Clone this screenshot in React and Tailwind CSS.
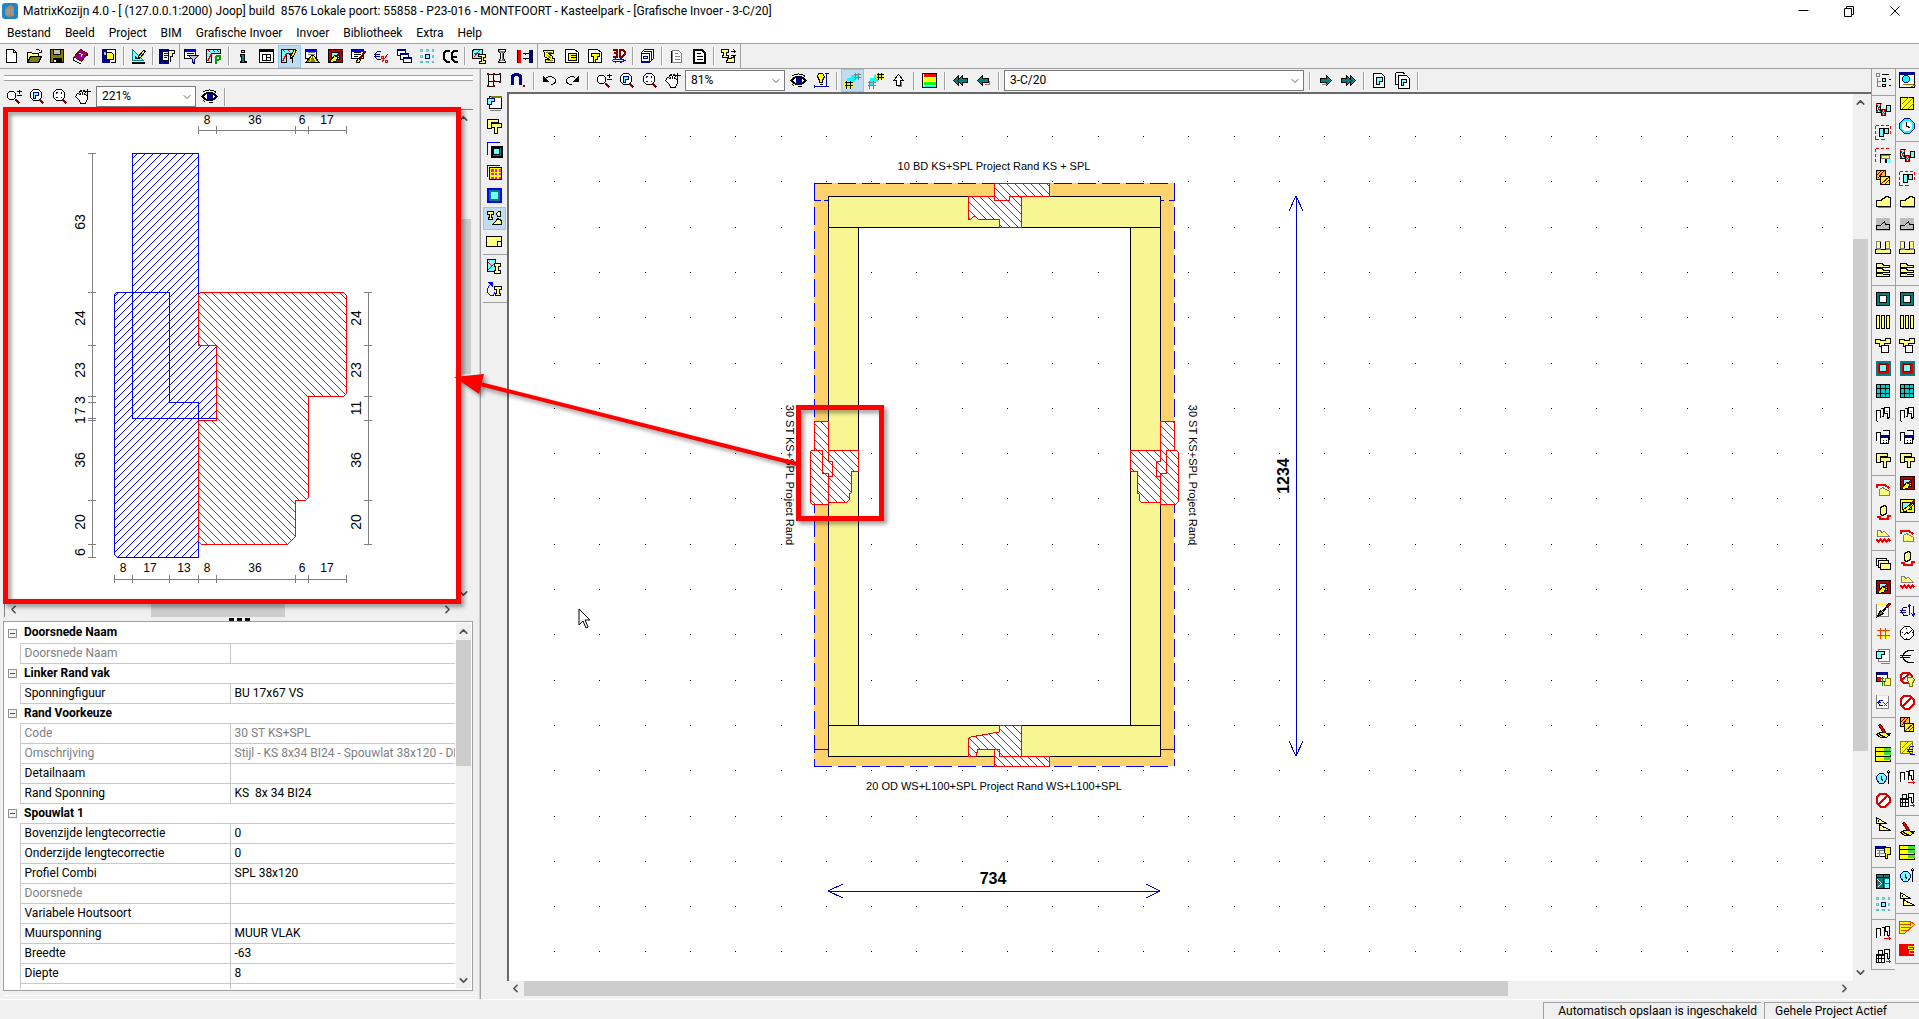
import { useState } from 'react';
import clsx from 'clsx';
import { ChevronUp, ChevronDown, ChevronLeft, ChevronRight } from 'lucide-react';

const K = '#000';
const W = '#fff';
const Y = '#ffff80';
const YY = '#ffff00';
const C = '#7ff';
const T = '#008080';
const N = '#000090';
const B = '#0000ff';
const R = '#f00000';
const M = '#800000';
const G = '#808080';
const L = '#c0c0c0';
const O = '#808000';

// toolbar glyphs on a 16x16 grid: [path, stroke, fill, stroke width]
const GLYPHS = {
  fresh: [['M3 1h7l3 3v10H3z', K, W], ['M10 1v3h3', K]],
  open: [['M1 13V4h4l1 1h6v3', K, Y], ['M1 14l3-6h11l-3 6z', K, O], ['M9 2c2-2 4-1 5 1m1-2v3h-3', K]],
  save: [['M1 1h13v13H1z', K, O], ['M4 1h7v5H4z', K, L], ['M4 10h8v4H4z', K, K], ['M5 11v2', W, null, 2]],
  book: [['M1 9l7-8 7 4-6 8z', M, '#900090'], ['M1 9v3l7 3 7-7V5', K], ['M2 10l7 4 6-6', W], ['M7 5l3 1-2 3', YY]],
  copybook: [['M1 1h7v13H1z', N, N], ['M5 1h9v13H9', K, W], ['M5 4h5l2 2v5H5z', K, YY], ['M3 3v3', L, null, 2]],
  square: [['M2 1v11h11z', T, C], ['M5 8v2h2z', K, W], ['M1 14h13', K, null, 2], ['M8 8l5-6 2 1-5 6-2 1z', K, YY]],
  profsheet: [['M0 1h9v14H0z', N, N], ['M3 3h6v9H3z', K, W], ['M4 5h4m-4 2h4m-4 2h3', B], ['M9 2h6v3h-2v3h-2v5', K, Y]],
  filter: [['M1 1h11v9H1z', K, W], ['M1 2h11', B, null, 2], ['M3 5h7m-7 2h7', K], ['M5 7h10l-4 4v4l-2-1v-3z', N, L]],
  projp: [['M0 1h14v4H5v9H0z', K, C], ['M1 13l4-8m-3-3l2 2m3-2l2 2m2-2l2 2', R], ['M9 7v8m0-8h3c2 0 2 4 0 4H9', '#00a000', null, 2]],
  info: [['M6 2h3v2H6z', K, C], ['M5 6h4v7h2v1H5v-1h1V8H5z', K, T]],
  window: [['M1 1h14v13H1z', K, W], ['M1 2h14', K, null, 2], ['M4 6h8v6H4zM8 6v6m0-3h4', K]],
  grafisch: [['M0 1h13v4H5v9H0z', K, C], ['M1 13l4-8m-3-3l2 2m3-2l2 2', R], ['M7 6h4v8', K], ['M9 8l4-7 2 1-4 7-2 1z', K, YY]],
  roof: [['M1 1h11v9H1z', K, W], ['M1 2h11', B, null, 2], ['M3 4h7m-7 2h7', G], ['M1 14l6-7h2l6 7z', K, O], ['M5 14l2-6m2 0l3 6', YY]],
  painting: [['M1 1h14v13H1z', K, YY], ['M3 4h9v7H3z', K, C], ['M4 11l9-7 1 2-6 6-4 2z', K, YY], ['M9 8l6-6', M, null, 2]],
  paintred: [['M1 1h14v13H1z', K, '#c00000'], ['M4 4h8v7H4z', K, C], ['M3 12l4-5 4 2-3 4-5 1z', K, YY], ['M9 8l6-6', M, null, 2]],
  brushlist: [['M1 1h12v9H1z', K, W], ['M1 2h12', B, null, 2], ['M3 4h7m-7 2h7m-7 2h4', K], ['M6 14l1-4 3 1-1 3z', K, YY], ['M9 10l6-7', M, null, 2]],
  europct: [['M7 3H4L2 5v4l2 2h3M0 6h6M0 8h6', N], ['M8 14l6-8M8 8h2v2H8zM12 12h2v2h-2z', R]],
  windows: [['M1 1h8v6H1z', K, W], ['M4 5h8v6H4z', K, W], ['M7 9h8v5H7z', K, W], ['M1 2h8M4 6h8M7 10h8', N]],
  dots9: [['M1 1h2v2H1zM7 1h2v2H7zM13 1h1v2h-1zM1 7h2v2H1zM13 7h1v2h-1zM1 13h2v1H1zM7 13h2v1H7zM13 13h1v1h-1z', '#5cc', C], ['M6 6h4v4H6z', N, C]],
  ce: [['M7 2H4L1 5v5l3 3h3', K, null, 2], ['M15 2h-3L9 5v5l3 3h3M9 8h5', K, null, 2]],
  catalog: [['M1 2l2-1h8v9H1z', K, C], ['M2 9l6-7M2 5h6', R], ['M7 6h7v3h-2v3h2v3H8v-2h2V8H7z', K, Y]],
  ibeam: [['M4 1h7v2L9 5v5l2 3v1H4v-1l2-3V5L4 3z', K, G], ['M5 2h5M5 13h5M7 4v7', W]],
  gaph: [['M2 1v13', R, null, 3], ['M13 1v13', N, null, 3], ['M5 5h6M5 10h6M8 4v2M8 9v2', K], ['M0 1v13m15-13v13', K]],
  scroll: [['M2 2h10v3H7l4 3v2h2v4H4v-3h4L3 8V5z', K, YY], ['M4 4h6M6 7l4 3M6 12h5', O]],
  yellowdoc: [['M1 1h9l4 3v10H1z', K, W], ['M4 5h8v7H4z', K, YY], ['M6 7h5M6 9h5', K]],
  profdoc: [['M1 1h9l4 3v10H1z', K, W], ['M4 5h8v3h-2v3H8v3H6V8H4z', K, YY]],
  threed: [['M2 1h4v3H3h3v4H2M9 1h3l2 2v3l-2 2H9z', M, null, 2], ['M2 12l3-2v1h5v-1l4 2-4 2v-1H5v1z', B, W]],
  stack: [['M5 1h9v9l-3 3H2V4z', N, W], ['M2 5h8v9H2zM4 3h8v8M4 8h4v2H4z', N]],
  docgray: [['M4 2h6l3 3v9H4z', G, W], ['M6 5h3m-3 3h5m-5 3h5', G], ['M3 2v12', K]],
  doclines: [['M2 1h8l3 3v10H2z', K, W, 2], ['M5 5h4m-4 3h6m-6 3h6', K]],
  convert: [['M1 1h7v3H6v3h2v2H2V7h1V4H1z', K, Y], ['M10 3h5m-2-2l2 2-2 2M15 7h-5', K], ['M7 10h3l4-2v6H6z', K, Y]],
  zoompm: [['M4 3h4l2 2v4l-2 2H4L2 9V5z', K, W], ['M10 11l4 4', M, null, 2], ['M11 3h5m-2-2v4m-3 2h5', K]],
  zoomp: [['M5 1h5l3 3v5l-3 3H5L2 9V4z', K, W], ['M5 10V4h5v3H7v3z', N, C], ['M11 11l4 4', M, null, 2]],
  zoomfit: [['M5 1h5l3 3v5l-3 3H5L2 9V4z', K, W], ['M5 5V4h1m3 0h1v1m0 3v1H9M6 9H5V8', N], ['M11 11l4 4', M, null, 2]],
  hand: [['M1 8l2-3 3 1-1-3 2-1 1 3 1-3 2 1-1 3 3 1v3l-2 5H6l-1-3z', K, W], ['M13 0v6m-3-3h6', K]],
  eye: [['M1 8c3-5 10-5 14 0-4 5-11 5-14 0z', K, W, 2], ['M6 6h4v4H6z', N, N, 2], ['M2 3c4-2 9-2 13 1M2 12l2 2m3 0h4', K]],
  magnet: [['M2 12V5c0-4 8-4 8 0v7', N, null, 3], ['M13 13h1v1h-1z', M, M]],
  undo: [['M5 5c4-2 9 0 9 3s-3 4-5 4', K], ['M2 4v5h5z', K, K]],
  redo: [['M11 5C7 3 2 5 2 8s3 4 5 4', K], ['M14 4v5H9z', K, K]],
  bulb: [['M5 1h4l2 3-2 4v2H6V8L4 4z', K, YY], ['M1 14h14M13 1v12M1 12v3m10-14h4', N], ['M6 12h3', K]],
  gridon: [['M4 12V7h4V4h5', '#0ff', null, 4], ['M0 9h8v5H0z', YY, '#cf0'], ['M2 8v8m4-8v8M0 10h8M0 13h8', K], ['M11 0v7m3-7v7M9 2h7M9 5h7', G]],
  gridoff: [['M4 12V7h4V4h5', '#0ff', null, 4], ['M9 1h7v5H9z', YY, '#cf0'], ['M2 8v8m4-8v8M0 10h8M0 13h8', G], ['M11 0v7m3-7v7M9 2h7M9 5h7', K]],
  up: [['M8 2l5 6h-3v5H6V8H3z', K, W], ['M11 9v5H7', G]],
  colors: [['M1 1h14v14H1z', K, W], ['M2 3h12', '#ff0000', null, 3], ['M2 7h12', YY, null, 3], ['M2 11h12', '#00ff00', null, 3], ['M2 14h12', '#0ff', null, 1]],
  left: [['M2 8l5-5v3h6v4H7v3z', K, T], ['M9 12h5V8', G]],
  left2: [['M1 8l5-5v10z', K, T], ['M5 8l5-5v3h5v4h-5v3z', K, T]],
  right: [['M14 8L9 3v3H3v4h6v3z', K, T], ['M4 12h5', G]],
  right2: [['M15 8l-5-5v10z', K, T], ['M11 8L6 3v3H1v4h5v3z', K, T]],
  docp: [['M2 1h8l3 3v11H2z', K, W], ['M5 12V5h6v4H8v3z', K, C]],
  docsp: [['M1 0h8l1 2M1 0v12h2', K], ['M4 3h8l3 3v10H4z', K, W], ['M7 13V7h5v3H9v3z', K, C]],
  nodes: [['M2 2h12v7H2V2v12h5V2', K], ['M1 1h1v1H1zM7 1h1v1H7zM13 1h1v1h-1zM1 13h1v1H1zM7 13h1v1H7zM13 9h1v1h-1zM7 8h1v1H7z', M, M]],
  cornerp: [['M3 1h12v12H3z', K, W], ['M4 1h11', O, null, 2], ['M1 9V3h7v3H5v3z', N, C], ['M3 15h11', G]],
  profiles: [['M1 1h11v3H5v6H1z', K, Y], ['M5 5h10v4h-4v6H8V9H5z', K, Y]],
  frameoff: [['M1 13V1h12', B, null, 1], ['M5 5h10v10H5z', K, T, 2], ['M7 7h6v6H7z', K, C]],
  gridpink: [['M1 12V1h12', B, null, 1], ['M3 3h12v12H3z', K, YY], ['M5 5h2v2H5zM9 5h1v2H9zM13 5h1v2h-1zM5 9h2v1H5zM9 9h1v1H9zM13 9h1v1h-1zM5 13h2v1H5zM9 13h1v1H9zM13 13h1v1h-1z', '#f0f', '#f0f']],
  framedash: [['M1 1h13v13H1z', B, W, 2], ['M3 3h9v9H3z', T, C, 2]],
  parts: [['M1 1h6v3H5v3h1v2H2V7h1V4H1z', K, Y], ['M10 3l2-2h2v5h-3z', K, Y], ['M6 14l4-4 1-2 4 2v4z', K, Y]],
  note: [['M0 3h15v10H0z', K, Y], ['M11 8h4v5h-4z', K, W]],
  combi: [['M1 1h8v12H1z', K, C], ['M1 12l7-7M2 4l4 4', R], ['M8 5h6v3h-2v4h2v3H8v-3h1V8H8z', K, Y]],
  rotate: [['M3 4L1 7v4l3 3h3l1-3', B, null, 1], ['M2 1h4v4z', B, B], ['M8 5h7v3h-2v4h1v2H9v-2h1V8H8z', K, Y]],
  tree: [['M1 1h3v3H1zM2 5v9m0-5h3m-3 5h3', G], ['M6 2h7', K], ['M7 6h3v3H7zM7 12h3v2H7z', K, C], ['M13 7h2m-2 6h2', K]],
  crosses: [['M1 2h4v9H1zM6 8h4v6H6zM11 4h4v6h-4z', K, C], ['M1 2l4 9M1 11l5-9m0 12l4-6m-4 0l4 6', R]],
  selp: [['M0 1h3m2 0h3m2 0h3m2 0v3m0 2v3M0 1v3m0 2v3m0 2v4h3m2 0h4', R], ['M4 12V4h4v8zM9 4h4v5H9z', K, C]],
  selcorner: [['M0 1h3m2 0h3m2 0h3M0 1v3m0 2v3m0 2v3', R], ['M5 15V7h10', K], ['M6 8h8v3H6z', G, Y], ['M10 11v4', K, null, 2], ['M13 12h2v3h-2z', C, C]],
  hatches: [['M1 0h9v9H1z', K, '#ffb040'], ['M5 6h9v8H5z', K, YY], ['M2 8l6-7M1 5l4-4m0 13l9-8m-5 8l5-5', M]],
  hatch: [['M1 2h13v12H1z', K, YY], ['M2 9l7-7M2 14L13 3M8 14l6-6', O]],
  clock: [['M5 0h5l5 5v5l-5 5H5l-5-5V5z', N, '#0ff'], ['M5 3h5l2 2v5l-2 2H5l-2-2V5z', W, W], ['M7 3v5l4 1', K]],
  clockwin: [['M0 0h15v15H0z', K, W], ['M0 1h15', N, null, 3], ['M5 3h3l2 2v3L8 10H5L3 8V5z', N, '#0ff'], ['M3 12h10l2 1-3 1', O, YY]],
  boot: [['M1 13V7h5l1-2h2V4l2-1 4 1v9z', K, Y], ['M2 14h13', G]],
  bootgray: [['M1 2h13v12H1z', L, '#bbb'], ['M1 9h4l4-4 1 3h4v5H1z', K, L]],
  uprof: [['M1 2h4v7H1zM10 2h4v7h-4z', G, Y], ['M0 10h15v4H0zM5 2v7m5-7v7', K, Y], ['M1 9h4m5 0h4', G, null, 2]],
  waves: [['M1 1h6l1 2h6v2H1zM1 6h6l1 2h6v2H1zM1 11h6l1 1h6v2H1z', K, Y]],
  frame: [['M1 1h13v13H1z', K, T, 1], ['M4 4h7v7H4z', K, W]],
  bars: [['M1 1h3v13H1zM6 1h3v13H6zM11 1h3v13h-3z', K, Y]],
  tprof: [['M0 2h5v1h5V1h5v5H9v3H4V6H0z', K, Y], ['M6 8h7v7H6z', K, W]],
  redframe: [['M1 1h13v13H1z', T, '#e00000', 2], ['M4 4h7v7H4z', M, C]],
  grid9: [['M1 1h13v13H1z', K, '#0cc'], ['M5 1v13M10 1v13M1 5h13M1 10h13', K]],
  hinge: [['M1 14V4h4v7M1 15h1M5 2h3v8H6M9 1h5v10l-2 1V7H9z', K, W], ['M10 5h2', G]],
  lock: [['M1 11V3h4v8M7 1h7v9', K, W], ['M5 6h8v8H5z', K, W], ['M5 7h8', N, null, 3], ['M7 11h1m2 0h1m-4 2h1m2 0h1', K]],
  hingered: [['M1 12V3h4v7M6 2h3v8M10 1h4v9h-2V6h-2z', K, W], ['M8 13h7m-2-2l2 2-2 2', R]],
  lockred: [['M3 5V2h4v3M9 1h5v9h-2V5H9z', K, W], ['M1 6h8v8H1z', K, W], ['M1 7h8M3 7v7m3-7v7M1 10h8', K], ['M10 13h5m-2-2l2 2-2 2', R]],
  redtop: [['M1 6V3h8l5 4', R, null, 2], ['M4 14V8l3-2 7 4v4z', G, Y]],
  redbot: [['M5 10V3l4-2 2 1v7l-4 2z', K, Y], ['M1 12h3v2h8v-3h3', R, null, 2]],
  redwave: [['M2 9V3h3l1 2 3-1 5 5z', G, Y], ['M1 12l2 2 2-2 2 2 2-2 2 2 2-2 2 2', R, null, 2]],
  cards: [['M1 2h10v7H1z', K, Y], ['M3 4h10v7H3z', K, Y], ['M5 7h10v6H5z', K, Y]],
  pencil: [['M1 2h12v12H1z', G, W], ['M1 2h12', YY], ['M2 14l3-6 3 3z', K, O], ['M7 9l7-8', K, null, 2], ['M11 5l4-4', M, null, 2]],
  hash: [['M6 3v11m5-11v11M2 6h12M2 11h12', YY], ['M5 2v11m5-11v11M1 5h13M1 10h13', '#f04000']],
  panelp: [['M3 1h11v12H3z', G, W], ['M1 10V3h8v3H6v4z', K, C], ['M5 15h9', G]],
  winchart: [['M1 1h11v9H1z', K, W], ['M1 2h11', N, null, 3], ['M2 6h3v3H2z', R, R], ['M7 14V6m-2 2l2-2 2 2', '#090'], ['M9 14l1-7h5v7z', O, Y]],
  europage: [['M1 1h12v13H1z', G, W], ['M1 1h12', YY], ['M7 6H4L3 8l1 3h3M1 8h4', B], ['M8 8l4 4m0-4l-4 4', R]],
  brushy: [['M1 11l4-2 10 1-4 4H5z', K, YY], ['M8 9L3 2l2-1 5 7z', M, R], ['M4 11l6 3m1-4l4 3', K]],
  rows3: [['M0 1h15v14H0z', K, YY], ['M8 3h7M8 7h7M8 12h7', '#4d4', null, 3], ['M0 5h15M0 10h15', K]],
  clockup: [['M4 4h4l3 3v3l-3 4H4l-3-4V7z', N, C], ['M6 6v4l2 1', K], ['M13 14V2m-2 2l2-3 2 3', K]],
  forbid: [['M5 1h5l4 4v5l-4 4H5l-4-4V5z', '#d00', W, 2], ['M3 12l9-9', '#d00', null, 2]],
  wedges: [['M1 8V2l10 6z', K, Y], ['M4 15V9l11 6z', K, Y], ['M3 4v2m4 6h2', K]],
  tableprof: [['M0 2h10v10H0z', K, W], ['M0 3h10', N, null, 3], ['M1 6h8M1 9h8M4 5v7', G], ['M9 3h6v7h-3v4h-2z', K, YY]],
  doorteal: [['M1 1h13v14H1z', K, T], ['M8 1v14M1 4h13', K], ['M10 6h3v3h-3zM10 11h3v3h-3z', C, C], ['M2 6l4 4-4 4', W]],
  euroarr: [['M7 5H4L2 8l2 5h4M0 8h6M0 10h6', N, null, 1], ['M10 12V3m-2 2l2-3 1 2M14 3v10m-2-2l2 3 1-3', B, null, 1]],
  gauge: [['M5 1h5l4 4v5l-4 4H5l-4-4V5z', K, W], ['M4 10l3-3 2 1 3-3', K], ['M7 2v1m0 10v-1M3 7H2m11 0h-1', K]],
  euro: [['M14 2H9L5 4 3 8l2 4 4 2h5M0 7h11M0 9h10', K]],
  forbidbulb: [['M4 1h5l3 3v4L9 11H4L1 8V4z', '#d00', W, 2], ['M2 9l8-7', '#d00', null, 2], ['M8 6h5l2 2-2 4v3h-3v-3L8 9z', O, Y]],
  euroyellow: [['M1 1h12v12H1z', O, YY], ['M2 8l7-7M2 13L12 3', O], ['M14 6h-3L9 9l2 5h4M7 9h6M7 11h6', B]],
  wood: [['M0 2h11l4 3-10 9H0z', '#e04000', YY], ['M0 5h11M1 8h9M1 11h6M11 2v4', '#e04000', null, 1]],
  redblock: [['M0 2h14v11H0z', R, R], ['M14 4H9v2h4M14 8h-4v3h5', YY, null, 1]],
};

const MAIN_GROUPS = [
  { items: ['fresh', 'open', 'save', 'book'] },
  { items: ['copybook'] },
  { items: ['square'] },
  { items: ['profsheet'], end: true },
  { items: ['filter', 'projp'] },
  { items: ['info', 'window', 'grafisch', 'roof', 'paintred', 'brushlist', 'europct', 'windows', 'dots9', 'ce'] },
  { items: ['catalog', 'ibeam', 'gaph'], end: true },
  { items: ['scroll', 'yellowdoc', 'profdoc', 'threed'] },
  { items: ['stack'] },
  { items: ['docgray', 'doclines'] },
  { items: ['convert'], end: true },
];

const SIDE_A = [
  ['tree'],
  ['crosses', 'selp', 'selcorner', 'hatches', 'boot', 'bootgray', 'uprof', 'waves'],
  ['frame', 'bars', 'tprof', 'redframe', 'grid9', 'hinge', 'lock', 'profiles'],
  ['redtop', 'redbot', 'redwave'],
  ['cards', 'paintred', 'pencil', 'hash', 'panelp', 'winchart', 'europage'],
  ['brushy', 'rows3', 'clockup', 'forbid', 'wedges'],
  ['tableprof'],
  ['doorteal', 'dots9'],
  ['hingered', 'lockred'],
];

const SIDE_B = [
  ['clockwin', 'hatch', 'clock'],
  ['crosses', 'selp', 'boot', 'bootgray', 'uprof', 'waves'],
  ['frame', 'bars', 'tprof', 'redframe', 'grid9', 'hinge', 'lock', 'profiles', 'paintred', 'painting'],
  ['redtop', 'redbot', 'redwave'],
  ['euroarr', 'gauge', 'euro', 'forbidbulb', 'forbid', 'hatches', 'euroyellow'],
  ['hingered', 'lockred'],
  ['brushy', 'rows3', 'clockup', 'wedges'],
  ['wood', 'redblock'],
];

const MENU = ['Bestand', 'Beeld', 'Project', 'BIM', 'Grafische Invoer', 'Invoer', 'Bibliotheek', 'Extra', 'Help'];

const PROPERTIES = [
  { title: 'Doorsnede Naam', rows: [['Doorsnede Naam', '', true]] },
  { title: 'Linker Rand vak', rows: [['Sponningfiguur', 'BU 17x67 VS']] },
  {
    title: 'Rand Voorkeuze',
    rows: [
      ['Code', '30 ST KS+SPL', true],
      ['Omschrijving', 'Stijl - KS 8x34 BI24 - Spouwlat 38x120 - DP', true],
      ['Detailnaam', ''],
      ['Rand Sponning', 'KS  8x 34 BI24'],
    ],
  },
  {
    title: 'Spouwlat 1',
    rows: [
      ['Bovenzijde lengtecorrectie', '0'],
      ['Onderzijde lengtecorrectie', '0'],
      ['Profiel Combi', 'SPL 38x120'],
      ['Doorsnede', '', true],
      ['Variabele Houtsoort', ''],
      ['Muursponning', 'MUUR VLAK'],
      ['Breedte', '-63'],
      ['Diepte', '8'],
      ['', ''],
    ],
  },
];

function Glyph({ name }) {
  return (
    <svg width="17" height="17" viewBox="-0.5 -0.5 17 17" shapeRendering="crispEdges" aria-hidden="true">
      {GLYPHS[name].map(([d, stroke, fill, width], i) => (
        <path key={i} d={d} stroke={stroke} fill={fill || 'none'} strokeWidth={width || 1} />
      ))}
    </svg>
  );
}

function Tool({ name, active, className }) {
  return (
    <button
      type="button"
      aria-label={name}
      className={clsx(
        'flex h-[23px] w-[23px] shrink-0 items-center justify-center',
        active && 'border border-[#90c8f6] bg-[#c0dcf3]',
        className,
      )}
    >
      <Glyph name={name} />
    </button>
  );
}

function Sep({ className = 'mx-[3px]' }) {
  return <span className={clsx('h-[18px] w-[2px] shrink-0 border-r border-l border-r-white border-l-[#a0a0a0]', className)} />;
}

function Combo({ label, value, className }) {
  return (
    <label className={clsx('relative flex shrink-0', className)}>
      <span className="sr-only">{label}</span>
      <select
        defaultValue={value}
        className="h-[21px] w-full appearance-none border border-[#7a7a7a] bg-white pl-[5px] font-[Roboto,sans-serif] text-[12px] leading-[19px] text-black"
      >
        <option>{value}</option>
      </select>
      <ChevronDown size={12} className="pointer-events-none absolute top-[5px] right-[3px] text-[#606060]" />
    </label>
  );
}

function ScrollY({ before, thumb, className }) {
  return (
    <div className={clsx('flex w-[15px] shrink-0 flex-col items-center bg-[#f0f0f0] text-[#505050]', className)}>
      <ChevronUp size={13} strokeWidth={3} className="my-[2px] shrink-0" />
      <div className="min-h-0 w-full" style={{ flexGrow: before }} />
      <div className="min-h-0 w-full bg-[#cdcdcd]" style={{ flexGrow: thumb }} />
      <div className="min-h-0 w-full" style={{ flexGrow: 100 - before - thumb }} />
      <ChevronDown size={13} strokeWidth={3} className="my-[2px] shrink-0" />
    </div>
  );
}

function ScrollX({ before, thumb }) {
  return (
    <div className="flex h-[15px] shrink-0 items-center bg-[#f0f0f0] text-[#505050]">
      <ChevronLeft size={13} strokeWidth={3} className="mx-[2px] shrink-0" />
      <div style={{ flexGrow: before }} />
      <div className="h-full bg-[#cdcdcd]" style={{ flexGrow: thumb }} />
      <div style={{ flexGrow: 100 - before - thumb }} />
      <ChevronRight size={13} strokeWidth={3} className="mx-[2px] shrink-0" />
    </div>
  );
}

// one pixel per row, so the diagonals stay hairline thin
const STEPS = [0, 1, 2, 3, 4, 5, 6, 7];
const FALLING = STEPS.map((n) => `M${n} ${n}h1v1h-1z`).join('');
const RISING = STEPS.map((n) => `M${n} ${7 - n}h1v1h-1z`).join('');

function Hatch({ id, color, d }) {
  return (
    <pattern id={id} width="8" height="8" patternUnits="userSpaceOnUse">
      <path d={d} fill={color} shapeRendering="crispEdges" />
    </pattern>
  );
}

// dimension chain of the section: ticks along one axis, a number between each pair
function Chain({ axis, at, ticks, labels, base }) {
  const vertical = axis === 'y';
  const first = ticks[0];
  const last = ticks[ticks.length - 1];
  const d = ticks.map((t) => (vertical ? `M${at - 4} ${t}h8` : `M${t} ${at - 4}v8`)).join('');
  const line = vertical ? `M${at} ${first}V${last}` : `M${first} ${at}H${last}`;
  return (
    <g>
      <path d={d + line} stroke="#808080" fill="none" shapeRendering="crispEdges" />
      {labels.map(([text, pos], i) => (
        <text
          key={i}
          textAnchor="middle"
          fontSize={vertical ? 14 : 12}
          transform={vertical ? `translate(${base} ${pos}) rotate(-90)` : `translate(${pos} ${base})`}
        >
          {text}
        </text>
      ))}
    </g>
  );
}

function SectionView() {
  return (
    <svg className="block h-full w-full font-['Liberation_Sans',Arial,sans-serif]">
      <defs>
        <Hatch id="blueHatch" color="#0000ff" d={RISING} />
        <Hatch id="redHatch" color="#ff0000" d={FALLING} />
      </defs>
      <g shapeRendering="crispEdges">
        <path
          d="M127 43H193V235H211V308H193V447H112l-3-3V185l3-3H127z"
          fill="url(#blueHatch)"
          stroke="#0000ff"
        />
        <path d="M127 182V308H211M127 182H164V292H193V308" fill="none" stroke="#0000ff" />
        <path
          d="M196 182H338l3 3V284l-2 2H303V388l-2 2H290V427l-7 7H196l-3-3V310H211V235H193V185z"
          fill="url(#redHatch)"
          stroke="#ff0000"
        />
      </g>
      <Chain axis="x" at={20} base={14} ticks={[193, 211, 290, 303, 341]}
        labels={[['8', 202], ['36', 250], ['6', 297], ['17', 322]]} />
      <Chain axis="x" at={469} base={462} ticks={[109, 127, 164, 193, 211, 290, 303, 341]}
        labels={[['8', 118], ['17', 145], ['13', 179], ['8', 202], ['36', 250], ['6', 297], ['17', 322]]} />
      <Chain axis="y" at={87} base={80} ticks={[43, 182, 235, 286, 292, 308, 310, 390, 434, 447]}
        labels={[['63', 112], ['24', 208], ['23', 260], ['3', 290], ['7', 301], ['1', 310], ['36', 350], ['20', 412], ['6', 442]]} />
      <Chain axis="y" at={363} base={356} ticks={[182, 235, 286, 310, 390, 434]}
        labels={[['24', 208], ['23', 260], ['11', 298], ['36', 350], ['20', 412]]} />
    </svg>
  );
}

const DOT_PITCH = 45.3;
let dots = '';
for (let i = 0; i < 60; i++) {
  for (let j = 0; j < 40; j++) {
    dots += `M${Math.round(45 + i * DOT_PITCH)} ${Math.round(42 + j * DOT_PITCH)}h1v1h-1z`;
  }
}

function FrameDrawing() {
  return (
    <svg className="block h-full w-full font-['Liberation_Sans',Arial,sans-serif]">
      <defs>
        <Hatch id="jointHatch" color="#ff0000" d={FALLING} />
      </defs>
      <path d={dots} fill="#000" shapeRendering="crispEdges" />
      <g shapeRendering="crispEdges" fill="none">
        <path d="M305 89H665V672H305zM319 102V662H651V102z" fill="#ffd26b" fillRule="evenodd" />
        <path d="M319 102H651V662H319zM349 133V631H621V133z" fill="#f8f593" fillRule="evenodd" />
        <path d="M319 102H651V662H319zM319 133H651M319 631H651M349 133V631M621 133V631" stroke="#000" />
        <path d="M305 89H665M305 672H665M305 89V672M665 89V672" stroke="#0000ff" strokeDasharray="18 6" />
        <path d="M305 106h7m3 0h4M651 106h4m5 0h5M305 655h14M651 655h14" stroke="#0000ff" />
      </g>

      <g shapeRendering="crispEdges" stroke="#ff0000">
        {[W, 'url(#jointHatch)'].map((fill) => (
          <g key={fill} fill={fill}>
            <path d="M459 102H485V106H500V102H512V133H490V125H469l-3-3-2 1-2 2h-3z" />
            <path d="M485 89H540V102H500V106H485z" />
            <path d="M301 358l2-2H313V379H319V410H303l-2-2z" />
            <path d="M305 356V327H319V367H323V382H319V379H313V356z" />
            <path d="M319 356H349V377H342V399l-2 1V406l-2 2H319V382H323V367H319z" />
            <path d="M669 358l-2-2H657V379H651V410H667l2-2z" />
            <path d="M665 356V327H651V367H647V382H651V379H657V356z" />
            <path d="M651 356H621V377H628V399l2 1V406l2 2H651V382H647V367H651z" />
            <path d="M490 631H512V662H490V655H469l-2 7h-8V645l3-2 28-5z" />
            <path d="M485 655h5v7h50V672H485z" />
          </g>
        ))}
      </g>

      <g shapeRendering="crispEdges" stroke="#0000cd" fill="none">
        <path d="M787 102V662M780 117l7-15 7 15M780 647l7 15 7-15" />
        <path d="M319 797H651M334 790l-15 7 15 7M637 790l14 7-14 7" />
      </g>
      <text x="484" y="790" textAnchor="middle" fontSize="16" fontWeight="700">734</text>
      <text transform="translate(780 382) rotate(-90)" textAnchor="middle" fontSize="16" fontWeight="700">1234</text>
      <g fontSize="11" textAnchor="middle">
        <text x="485" y="76">10 BD KS+SPL Project Rand KS + SPL</text>
        <text x="485" y="696">20 OD WS+L100+SPL Project Rand WS+L100+SPL</text>
        <text transform="translate(277 381) rotate(90)">30 ST KS+SPL Project Rand</text>
        <text transform="translate(680 381) rotate(90)">30 ST KS+SPL Project Rand</text>
      </g>
      <path d="M70 515v16l4-4 3 7 2-1-3-7h5z" fill="#fff" stroke="#000" />
    </svg>
  );
}

function PropertyGrid() {
  const [closed, setClosed] = useState({});
  return (
    <div className="mr-[6px] ml-[3px] flex min-h-0 flex-1 border border-[#a0a0a0] bg-white p-px">
      <div className="min-w-0 flex-1 overflow-hidden">
        <table className="w-full table-fixed border-collapse text-[12px] leading-[19px]">
          <colgroup>
            <col className="w-[15px]" />
            <col className="w-[210px]" />
            <col />
          </colgroup>
          {PROPERTIES.map(({ title, rows }) => (
            <tbody key={title}>
              <tr className="h-[20px]">
                <td className="p-0">
                  <button
                    type="button"
                    aria-label={title}
                    onClick={() => setClosed({ ...closed, [title]: !closed[title] })}
                    className="ml-[3px] flex h-[9px] w-[9px] items-center justify-center border border-[#919191] bg-[#f4f4f4]"
                  >
                    <span className="h-px w-[5px] bg-[#3050b0]" />
                  </button>
                </td>
                <th colSpan="2" className="p-0 pl-[4px] text-left font-bold">{title}</th>
              </tr>
              {!closed[title] && rows.map(([name, value, muted]) => (
                <tr key={name} className={clsx('h-[20px]', muted && 'text-[#808080]')}>
                  <td className="p-0" />
                  <td className="border border-[#c8c8c8] p-0 pl-[4px] whitespace-nowrap">{name}</td>
                  <td className="overflow-hidden border-y border-[#c8c8c8] p-0 pl-[4px] whitespace-pre">{value}</td>
                </tr>
              ))}
            </tbody>
          ))}
        </table>
      </div>
      <ScrollY before={0} thumb={38} className="ml-px" />
    </div>
  );
}

function LeftDock() {
  return (
    <aside className="flex w-[480px] shrink-0 flex-col border-r border-[#d0d0d0]">
      <div className="mt-[6px] mr-[6px] ml-[4px] h-[6px] shrink-0 border-y border-[#a0a0a0] bg-white" />
      <div className="flex h-[28px] shrink-0 items-center pt-[3px] pl-[2px]">
        <Tool name="zoompm" />
        <Tool name="zoomp" />
        <Tool name="zoomfit" />
        <Tool name="hand" />
        <Combo label="Zoom doorsnede" value="221%" className="ml-[2px] w-[100px]" />
        <Tool name="eye" className="ml-[2px]" />
        <Sep />
      </div>
      <div className="mr-[6px] ml-[4px] flex h-[508px] shrink-0 flex-col border-t border-l border-[#808080]">
        <div className="flex min-h-0 flex-1">
          <div className="min-w-0 flex-1 bg-white">
            <SectionView />
          </div>
          <ScrollY before={20} thumb={34} className="mr-[2px]" />
        </div>
        <div className="mr-[17px]">
          <ScrollX before={31} thumb={32} />
        </div>
      </div>
      <div className="flex h-[4px] shrink-0 items-end justify-center gap-[3px]">
        <span className="h-[3px] w-[5px] bg-black" />
        <span className="h-[3px] w-[5px] bg-black" />
        <span className="h-[3px] w-[5px] bg-black" />
      </div>
      <PropertyGrid />
      <div className="mt-[4px] mr-[2px] ml-[4px] h-[4px] shrink-0 border-t border-white" />
    </aside>
  );
}

function DrawTools() {
  return (
    <div className="flex w-[27px] shrink-0 flex-col border-l border-[#a0a0a0] pl-[2px]">
      <div className="flex flex-col border-b border-[#a0a0a0] pb-px">
        {['nodes', 'cornerp', 'profiles', 'frameoff', 'gridpink', 'framedash', 'parts', 'note'].map((name) => (
          <Tool key={name} name={name} active={name === 'parts'} />
        ))}
      </div>
      <div className="flex flex-col border-b border-[#a0a0a0] pb-px">
        <Tool name="combi" />
        <Tool name="rotate" />
      </div>
    </div>
  );
}

function CanvasTools() {
  return (
    <div className="flex h-[23px] shrink-0 items-center">
      <Tool name="magnet" />
      <Sep />
      <Tool name="undo" />
      <Tool name="redo" />
      <Sep />
      <Tool name="zoompm" />
      <Tool name="zoomp" />
      <Tool name="zoomfit" />
      <Tool name="hand" />
      <Combo label="Zoom" value="81%" className="ml-px w-[100px]" />
      <Tool name="eye" className="ml-[2px]" />
      <Tool name="bulb" />
      <Sep />
      <Tool name="gridon" active />
      <Tool name="gridoff" />
      <Tool name="up" />
      <Sep />
      <Tool name="colors" />
      <Sep />
      <Tool name="left2" />
      <Tool name="left" />
      <Sep />
      <Combo label="Merk" value="3-C/20" className="mr-[2px] ml-px w-[300px]" />
      <Sep />
      <Tool name="right" />
      <Tool name="right2" />
      <Sep />
      <Tool name="docp" />
      <Tool name="docsp" />
      <Sep />
    </div>
  );
}

function SideTools({ groups }) {
  return (
    <div className="flex w-[24px] flex-col self-start border-b border-l border-[#a0a0a0] pb-px">
      {groups.map((items, i) => (
        <div key={i} className={clsx('flex flex-col items-center', i > 0 && 'mt-[3px] border-t border-[#a0a0a0] pt-[2px]')}>
          {items.map((name) => <Tool key={name} name={name} />)}
        </div>
      ))}
    </div>
  );
}

// red marker boxes and the arrow that ties the joint to its section
function Callouts() {
  return (
    <svg className="pointer-events-none absolute inset-0 h-full w-full drop-shadow-[3px_3px_2px_rgba(0,0,0,0.4)]">
      <path
        d="M3 107H461V604H3zM8 112V599H456V112zM796 405H884V521H796zM801 410V516H879V410z"
        fill="#ff0000"
        fillRule="evenodd"
      />
      <path d="M480 384L797 464" stroke="#ff0000" strokeWidth="4" />
      <path d="M454 377L484 374 479 394z" fill="#ff0000" />
    </svg>
  );
}

export default function App() {
  return (
    <div className="relative flex h-screen min-h-[900px] flex-col overflow-hidden bg-[#f0f0f0] font-[Roboto,sans-serif] text-[12px] text-black">
      <header className="flex h-[22px] shrink-0 items-center bg-white pr-px">
        <svg width="16" height="16" viewBox="0 0 16 16" className="ml-[2px]" aria-hidden="true">
          <rect width="16" height="16" rx="3" fill="#1b86c9" />
          <path d="M3 6l5-4 4 2v9l-5 1-4-2z" fill="#b9855a" />
          <path d="M5 7l3-2v6l-3 1zM9 5l2 1v5l-2 1z" fill="#6fa8cc" />
        </svg>
        <h1 className="ml-[5px] flex-1 whitespace-pre">
          MatrixKozijn 4.0 - [ (127.0.0.1:2000) Joop] build  8576 Lokale poort: 55858 - P23-016 - MONTFOORT - Kasteelpark - [Grafische Invoer - 3-C/20]
        </h1>
        {['M1 5h10', 'M1 3h7v8H1zM3 3V1h7v8H8', 'M1 1l9 9M10 1l-9 9'].map((d, i) => (
          <button key={d} type="button" aria-label={['Minimaliseren', 'Vorig formaat', 'Sluiten'][i]} className="flex h-full w-[46px] items-center justify-center">
            <svg width="12" height="12" viewBox="-0.5 -0.5 12 12"><path d={d} stroke="#000" fill="none" /></svg>
          </button>
        ))}
      </header>

      <nav className="flex h-[21px] shrink-0 items-center gap-[14px] bg-white pl-[7px]">
        {MENU.map((item) => <button key={item} type="button">{item}</button>)}
      </nav>

      <div className="flex h-[26px] shrink-0 items-center border-y border-[#a0a0a0]">
        {MAIN_GROUPS.map(({ items, end }, i) => (
          <div key={i} className={clsx('flex items-center', end && 'h-full border-r border-[#a0a0a0]')}>
            {i > 0 && !MAIN_GROUPS[i - 1].end && <Sep className="mx-[2px]" />}
            {items.map((name) => <Tool key={name} name={name} active={name === 'grafisch'} />)}
          </div>
        ))}
      </div>

      <div className="flex min-h-0 flex-1">
        <LeftDock />
        <DrawTools />
        <main className="flex min-w-0 flex-1 flex-col">
          <CanvasTools />
          <div className="flex min-h-0 flex-1 border-t-2 border-l-2 border-[#696969]">
            <div className="min-w-0 flex-1 bg-white">
              <FrameDrawing />
            </div>
            <ScrollY before={15} thumb={60} className="mr-[3px]" />
          </div>
          <div className="mb-[3px] pr-[18px]">
            <ScrollX before={0} thumb={75} />
          </div>
        </main>
        <SideTools groups={SIDE_A} />
        <SideTools groups={SIDE_B} />
      </div>

      <footer className="flex h-[20px] shrink-0 items-end justify-end gap-[3px] border-t border-white">
        <p className="h-[17px] w-[218px] border-t border-l border-[#a0a0a0] pr-1 text-right leading-[17px]">Automatisch opslaan is ingeschakeld</p>
        <p className="h-[17px] w-[155px] border-t border-l border-[#a0a0a0] pl-[10px] leading-[17px]">Gehele Project Actief</p>
      </footer>

      <Callouts />
    </div>
  );
}
